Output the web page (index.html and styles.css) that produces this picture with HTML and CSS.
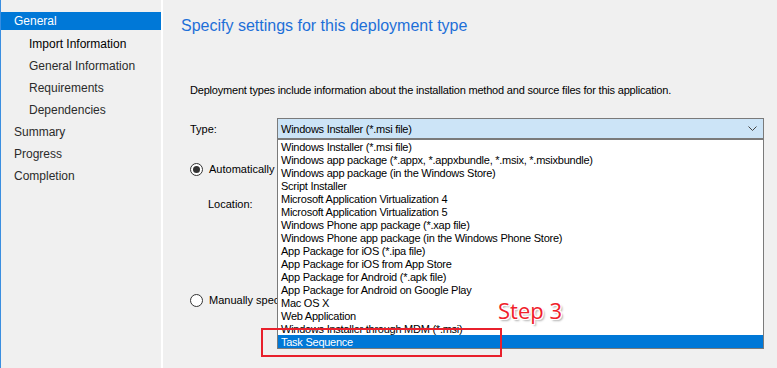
FILE: index.html
```html
<!DOCTYPE html>
<html>
<head>
<meta charset="utf-8">
<link rel="stylesheet" href="styles.css">
</head>
<body>
<div class="app">
  <nav class="sidebar">
    <div class="nav-item active">General</div>
    <div class="nav-item sub current">Import Information</div>
    <div class="nav-item sub">General Information</div>
    <div class="nav-item sub">Requirements</div>
    <div class="nav-item sub">Dependencies</div>
    <div class="nav-item">Summary</div>
    <div class="nav-item">Progress</div>
    <div class="nav-item">Completion</div>
  </nav>
  <div class="divider"></div>
  <main class="main">
    <h1 class="title">Specify settings for this deployment type</h1>
    <p class="desc">Deployment types include information about the installation method and source files for this application.</p>
    <div class="type-row">
      <span class="type-label">Type:</span>
      <div class="combo-wrap">
        <div class="combo">
          <span class="combo-text">Windows Installer (*.msi file)</span>
          <svg class="chev" width="9" height="6" viewBox="0 0 9 6"><polyline points="0.5,0.5 4.5,4.5 8.5,0.5" fill="none" stroke="#444" stroke-width="1"/></svg>
        </div>
        <ul class="dropdown">
          <li>Windows Installer (*.msi file)</li>
          <li>Windows app package (*.appx, *.appxbundle, *.msix, *.msixbundle)</li>
          <li>Windows app package (in the Windows Store)</li>
          <li>Script Installer</li>
          <li>Microsoft Application Virtualization 4</li>
          <li>Microsoft Application Virtualization 5</li>
          <li>Windows Phone app package (*.xap file)</li>
          <li>Windows Phone app package (in the Windows Phone Store)</li>
          <li>App Package for iOS (*.ipa file)</li>
          <li>App Package for iOS from App Store</li>
          <li>App Package for Android (*.apk file)</li>
          <li>App Package for Android on Google Play</li>
          <li>Mac OS X</li>
          <li>Web Application</li>
          <li>Windows Installer through MDM (*.msi)</li>
          <li class="selected">Task Sequence</li>
        </ul>
        <div class="annot-box"></div>
        <div class="annot-text">Step 3</div>
      </div>
    </div>
    <div class="radio-row first">
      <span class="radio checked"></span>
      <span class="radio-label">Automatically identify information about this app from installation files</span>
    </div>
    <div class="loc-row">Location:</div>
    <div class="radio-row second">
      <span class="radio"></span>
      <span class="radio-label">Manually specify the deployment type information</span>
    </div>
  </main>
</div>
</body>
</html>
```

FILE: styles.css
```css
* { box-sizing: border-box; }
html, body {
  margin: 0;
  padding: 0;
  background: #f0f0f0;
  width: 777px;
  height: 368px;
  overflow: hidden;
}
body {
  font-family: "Liberation Sans", Arial, sans-serif;
  color: #000;
}
.app {
  display: flex;
  height: 368px;
}
.sidebar {
  width: 161px;
  flex: none;
  border-left: 1px solid #3a8ee0;
  padding-top: 12px;
  font-size: 12px;
  color: #2b2b2b;
}
.nav-item {
  height: 22px;
  line-height: 20px;
  padding-left: 13px;
}
.nav-item.active {
  background: #0078d7;
  color: #fff;
  height: 18px;
  line-height: 19px;
  margin-bottom: 4px;
}
.nav-item.sub { padding-left: 28px; }
.nav-item.current { color: #000; }
.divider {
  width: 2px;
  flex: none;
  background: #fff;
}
.main {
  flex: 1;
  padding-left: 18px;
  padding-top: 16px;
}
.title {
  margin: 0;
  font-weight: normal;
  font-size: 16px;
  line-height: 20px;
  color: #1d6fd8;
}
.desc {
  margin: 47px 0 0 9px;
  font-size: 11px;
  line-height: 14px;
  letter-spacing: -0.2px;
}
.type-row {
  margin: 21px 0 0 9px;
  display: flex;
  align-items: center;
  font-size: 11px;
}
.type-label {
  width: 87px;
  flex: none;
}
.combo-wrap {
  position: relative;
  width: 487px;
  flex: none;
}
.combo {
  height: 21px;
  border: 1px solid #7a7a7a;
  background: #cce4f7;
  display: flex;
  align-items: center;
  justify-content: space-between;
  padding: 0 6px 0 3px;
  letter-spacing: -0.25px;
}
.chev { display: block; margin-top: 1px; }
.dropdown {
  position: absolute;
  left: 0;
  top: 21px;
  width: 487px;
  height: 210px;
  margin: 0;
  padding: 0;
  list-style: none;
  background: #fff;
  border: 1px solid #7a7a7a;
  z-index: 2;
}
.dropdown li {
  height: 13px;
  line-height: 14px;
  padding-left: 3px;
  letter-spacing: -0.25px;
  white-space: nowrap;
}
.dropdown li.selected {
  background: #0078d7;
  color: #fff;
}
.annot-box {
  position: absolute;
  left: -16px;
  top: 210px;
  width: 241px;
  height: 29px;
  border: 2px solid #e8202c;
  z-index: 3;
}
.annot-text {
  position: absolute;
  left: 221px;
  top: 178px;
  font-family: "Open Sans", sans-serif;
  font-size: 22px;
  line-height: 28px;
  color: #f0202a;
  z-index: 3;
  text-shadow: 1px 0 0 #fff, -1px 0 0 #fff, 0 1px 0 #fff, 0 -1px 0 #fff,
               1px 1px 0 #fff, -1px -1px 0 #fff, 1px -1px 0 #fff, -1px 1px 0 #fff,
               2px 2px 2px rgba(0,0,0,0.35);
}
.radio-row {
  display: flex;
  align-items: center;
  font-size: 11px;
  height: 14px;
  white-space: nowrap;
}
.radio-row.first { margin: 23px 0 0 9px; }
.radio-row.second { margin: 83px 0 0 9px; }
.radio {
  width: 13px;
  height: 13px;
  border: 1px solid #333;
  border-radius: 50%;
  background: #fff;
  margin-right: 6px;
  flex: none;
  display: flex;
  align-items: center;
  justify-content: center;
}
.radio.checked::after {
  content: "";
  width: 7px;
  height: 7px;
  border-radius: 50%;
  background: #333;
}
.loc-row {
  margin: 20px 0 0 27px;
  font-size: 11px;
  height: 14px;
  line-height: 16px;
}
```
